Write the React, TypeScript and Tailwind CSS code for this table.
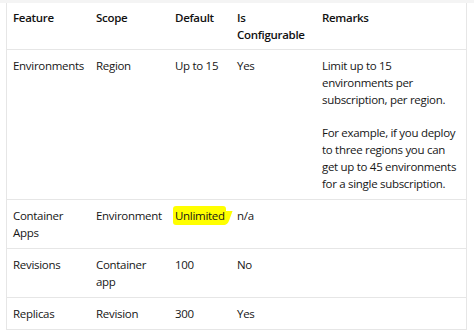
import React from "react";

type Row = {
  feature: React.ReactNode;
  scope: React.ReactNode;
  def: React.ReactNode;
  conf: string;
  remarks?: string[];
};

const rows: Row[] = [
  {
    feature: "Environments",
    scope: "Region",
    def: "Up to 15",
    conf: "Yes",
    remarks: [
      "Limit up to 15 environments per subscription, per region.",
      "For example, if you deploy to three regions you can get up to 45 environments for a single subscription.",
    ],
  },
  {
    feature: "Container Apps",
    scope: "Environment",
    def: (
      <span className="relative inline-block">
        {/* hand-drawn marker highlight */}
        <span className="absolute -left-[2px] -right-[1px] -top-[1px] -bottom-[1px] rounded-[3px] bg-[#ffff00]" />
        <span className="absolute -right-[5px] top-[4px] h-[14px] w-[8px] -skew-x-[20deg] rounded-br-[4px] bg-[#ffff00]" />
        <span className="relative">Unlimited</span>
      </span>
    ),
    conf: "n/a",
  },
  { feature: "Revisions", scope: "Container app", def: "100", conf: "No" },
  { feature: "Replicas", scope: "Revision", def: "300", conf: "Yes" },
];

const cell = "px-[6px] py-[7px] align-top";

export default function App() {
  return (
    <div
      className="h-[334px] w-[474px] bg-white text-[11.5px] leading-[17px] tracking-[-0.3px] text-[#161616]"
      style={{ fontFamily: '"Open Sans", "Noto Sans", sans-serif' }}
    >
      <div className="h-[3px] bg-[#f4f4f4]" />
      <div className="ml-[6px] w-[461px] border-x border-b border-[#e6e6e6]">
        <table className="w-full table-fixed border-collapse">
          <colgroup>
            <col className="w-[83px]" />
            <col className="w-[79px]" />
            <col className="w-[62px]" />
            <col className="w-[85px]" />
            <col />
          </colgroup>
          <thead>
            <tr className="border-b border-[#e6e6e6] text-left text-[#111]">
              <th className={`${cell} pt-[6px] pb-[6px] font-semibold`}>Feature</th>
              <th className={`${cell} pt-[6px] pb-[6px] font-semibold`}>Scope</th>
              <th className={`${cell} pt-[6px] pb-[6px] font-semibold`}>Default</th>
              <th className={`${cell} pt-[6px] pb-[6px] font-semibold`}>Is Configurable</th>
              <th className={`${cell} pt-[6px] pb-[6px] font-semibold`}>Remarks</th>
            </tr>
          </thead>
          <tbody>
            {rows.map((r, i) => (
              <tr key={i} className={i < rows.length - 1 ? "border-b border-[#e6e6e6]" : ""}>
                <td className={cell}>{r.feature}</td>
                <td className={cell}>{r.scope}</td>
                <td className={cell}>{r.def}</td>
                <td className={cell}>{r.conf}</td>
                <td className={`${cell} pr-[7px]`}>
                  {r.remarks?.map((p, j) => (
                    <p key={j} className={j > 0 ? "mt-[16px]" : ""}>
                      {p}
                    </p>
                  ))}
                </td>
              </tr>
            ))}
          </tbody>
        </table>
      </div>
    </div>
  );
}
